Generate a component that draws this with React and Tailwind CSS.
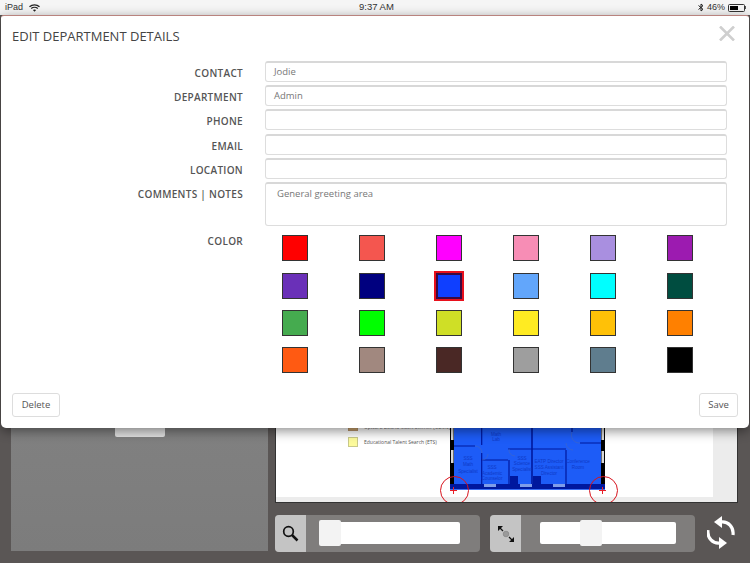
import React from "react";

const colors = [
  "#ff0000", "#f4564f", "#ff00ff", "#f78db5", "#a98fe0", "#9c1bb0",
  "#6a30b8", "#00007f", "#0f3fff", "#62a6fb", "#00ffff", "#004d40",
  "#45ab4f", "#00ff00", "#cfdf26", "#ffeb22", "#ffc107", "#ff8000",
  "#ff5a12", "#a1887f", "#4a2825", "#9e9e9e", "#5f7d8e", "#000000",
];

const labelClass = "w-[242px] text-right text-[10px] tracking-[0.3px] font-semibold text-[#555]";
const boxClass = "ml-[22px] w-[462px] rounded-[3px] border border-[#ddd] border-t-2 border-t-[#d8d8d8] bg-white text-[9.5px] text-[#777]";

function Field({ label, value }) {
  return (
    <div className="flex items-center h-[24.3px]">
      <div className={`${labelClass} pt-[4px]`}>{label}</div>
      <div className={`${boxClass} h-[21px] px-[8px] leading-[18px]`}>{value}</div>
    </div>
  );
}

function Slider({ icon, trackClass, knobClass }) {
  return (
    <div className="w-[205px] h-[37px] rounded-[4px] bg-[#7f7d7c] flex overflow-hidden shrink-0">
      <div className="w-[31px] bg-[#c4c4c4] flex items-center justify-center shrink-0">{icon}</div>
      <div className={`mt-[7px] h-[22px] rounded-[2px] bg-white relative ${trackClass}`}>
        <div className={`absolute top-[-2px] w-[22px] h-[26px] rounded-[2px] bg-[#f3f3f3] ${knobClass}`} />
      </div>
    </div>
  );
}

function FloorPlan() {
  return (
    <svg viewBox="0 0 155 65" className="w-[155px] h-[65px] absolute left-[174px] top-[409px]" fill="none">
      <rect x="0" y="0" width="155" height="65" fill="#1d5cf7" />
      <rect x="0" y="64" width="155" height="1" fill="#3a6ff5" />
      <rect x="0" y="0" width="4" height="59" fill="#000" />
      <rect x="1" y="0" width="2.5" height="15" fill="#d8d8d8" />
      <rect x="1" y="25" width="2.5" height="13" fill="#d8d8d8" />
      <rect x="151" y="0" width="4" height="59" fill="#000" />
      <rect x="151.5" y="0" width="2.5" height="15" fill="#d8d8d8" />
      <rect x="151.5" y="26" width="2.5" height="12" fill="#d8d8d8" />
      <rect x="0" y="59" width="155" height="5" fill="#00189e" />
      <rect x="34" y="59" width="12" height="3" fill="#7f9de8" />
      <rect x="70" y="59" width="12" height="3" fill="#7f9de8" />
      <rect x="103" y="59" width="12" height="3" fill="#7f9de8" />
      <rect x="60" y="51" width="8" height="8" fill="#00189e" />
      <rect x="83" y="51" width="8" height="8" fill="#00189e" />
      <g stroke="#00189e" strokeWidth="1.2">
        <path d="M4 21H25M31.7 0V20M31.7 28V59M31 35H58M59 35V59M58 24H116M116 25V59M130 18H151M122 0V7" />
        <path d="M82 0V59" strokeWidth="1.6" />
      </g>
      <g stroke="#3f66c8" strokeWidth="0.7">
        <path d="M25 21A7 7 0 0 1 32 28M59 24A6 6 0 0 0 65 31M116 18A7 7 0 0 0 123 25M122 7A8 8 0 0 0 130 18M32 35A6 6 0 0 0 38 29" />
      </g>
      <g fill="#0f3ac8" fontSize="4.6" fontFamily="Liberation Sans, sans-serif" textAnchor="middle">
        <text x="18" y="35">SSS</text><text x="18" y="41">Math</text><text x="18" y="48">Specialist</text>
        <text x="46" y="11">Math</text><text x="46" y="16">Lab</text>
        <text x="42" y="44">SSS</text><text x="42" y="50">Academic</text><text x="42" y="55">Counselor</text>
        <text x="72" y="35">SSS</text><text x="72" y="40">Science</text><text x="72" y="46">Specialist</text>
        <text x="99" y="38">EATP Director</text><text x="99" y="44">SSS Assistant</text><text x="99" y="50">Director</text>
        <text x="128" y="38">Conference</text><text x="128" y="44">Room</text>
      </g>
    </svg>
  );
}

function Crosshair({ className }) {
  return (
    <div className={`absolute w-[29px] h-[29px] rounded-full border-[1.5px] border-[#d8141e] ${className}`}>
      <div className="absolute left-[9.5px] top-[12.5px] w-[7px] h-px bg-[#e8202a]" />
      <div className="absolute left-[12.5px] top-[9.5px] w-px h-[7px] bg-[#e8202a]" />
    </div>
  );
}

export default function App() {
  return (
    <div className="relative w-[750px] h-[563px] overflow-hidden bg-[#5a5655] font-['Open_Sans',sans-serif]">
      {/* status bar */}
      <div className="h-[15px] bg-[#f5f5f5] flex items-center justify-between pl-[5px] pr-[4px] text-[9px] text-[#333] font-['Liberation_Sans',sans-serif]">
        <div className="flex items-center gap-[6px]">
          <span>iPad</span>
          <svg width="11" height="8" viewBox="0 0 11 8" fill="none" stroke="#222" strokeWidth="1.3">
            <path d="M.5 2.8C3.3.2 7.7.2 10.5 2.8M2.2 4.5C4 3 7 3 8.8 4.5" />
            <path d="M3.9 6.1C4.8 5.4 6.2 5.4 7.1 6.1L5.5 7.8Z" fill="#222" stroke="none" />
          </svg>
        </div>
        <span className="absolute left-[359px] text-[9.5px]">9:37 AM</span>
        <div className="flex items-center gap-[3px]">
          <svg width="6" height="9" viewBox="0 0 6 9" fill="none" stroke="#222" strokeWidth="1"><path d="M0.5 2.5 5 6.3 3 8V1l2 1.7L.5 6.5" /></svg>
          <span>46%</span>
          <div className="flex items-center">
            <div className="w-[17px] h-[8px] border border-[#333] rounded-[1.5px] p-[1px]"><div className="w-[8px] h-full bg-black" /></div>
            <div className="w-[1px] h-[3px] bg-[#555]" />
          </div>
        </div>
      </div>

      {/* background app */}
      <div className="h-[548px] flex pl-[11px] pr-[12px] gap-[7px]">
        <div className="w-[257px] h-[536px] bg-gradient-to-b from-[#8e8e8e] to-[#7c7c7c] relative">
          <div className="absolute left-[104px] top-[400px] w-[50px] h-[22px] rounded-[2px] bg-[#e2e2e2]" />
        </div>
        <div className="flex-1 flex flex-col">
          <div className="relative h-[488px] bg-white border border-[#333] overflow-hidden">
            <div className="absolute right-0 top-0 bottom-0 w-[24px] bg-[#ececec]" />
            <div className="absolute left-0 right-0 bottom-0 h-[5px] bg-[#ececec]" />
            <div className="absolute left-[72px] top-[407px] w-[10px] h-[8px] border border-[#b8946a] bg-[#c9a26d]" />
            <div className="absolute left-[72px] top-[421px] w-[10px] h-[10px] border border-[#c9c98a] bg-[#fdfb9c]" />
            <div className="absolute left-[88px] top-[408px] text-[5px] leading-[7px] text-[#666] whitespace-nowrap">Upward Bound Math/Science (UBMS)</div>
            <div className="absolute left-[88px] top-[422.5px] text-[5px] leading-[7px] text-[#555] whitespace-nowrap">Educational Talent Search (ETS)</div>
            <FloorPlan />
            <Crosshair className="left-[163.5px] top-[460px]" />
            <Crosshair className="left-[312.5px] top-[460px]" />
          </div>
          <div className="flex items-start mt-[12px] gap-[10px]">
            <Slider
              trackClass="ml-[13px] w-[141px]"
              knobClass="left-0"
              icon={
                <svg width="17" height="17" viewBox="0 0 17 17" fill="none" stroke="#111" strokeWidth="1.7">
                  <circle cx="6.5" cy="6.5" r="4.8" /><path d="M10 10l5.5 5.5" strokeWidth="2.5" />
                </svg>
              }
            />
            <Slider
              trackClass="ml-[19px] w-[136px]"
              knobClass="left-[40px]"
              icon={
                <svg width="18" height="18" viewBox="0 0 18 18" fill="none">
                  <path d="M2.5 2.5l3.5 3.5M12 12l3.5 3.5" stroke="#111" strokeWidth="1.3" />
                  <path d="M1 1h5L1 6zM17 17h-5l5-5z" fill="#111" />
                  <circle cx="9" cy="9" r="2.8" fill="#9a9a9a" stroke="#888" strokeWidth="0.8" />
                </svg>
              }
            />
            <svg width="28" height="35" viewBox="0 0 28 35" fill="none" className="ml-[2px] mt-[1px]">
              <path d="M14 6C21 5 27 11 26 19" stroke="#fff" strokeWidth="3.2" />
              <path d="M7 6l8-6v12z" fill="#fff" />
              <path d="M13 27C6 28 0 22 1 14" stroke="#fff" strokeWidth="3.2" />
              <path d="M20 27l-8-6v12z" fill="#fff" />
            </svg>
          </div>
        </div>
      </div>

      {/* modal */}
      <div className="absolute left-[1px] top-[15px] w-[748px] h-[413px] bg-white rounded-b-[5px] rounded-t-[3px] border-t border-t-[#b9837e] shadow-[0_3px_12px_rgba(0,0,0,0.45)]">
        <div className="absolute left-[11px] top-[11px] text-[13px] leading-[18px] text-[#444]">EDIT DEPARTMENT DETAILS</div>
        <svg className="absolute right-[14px] top-[10px]" width="16" height="15" viewBox="0 0 16 15" stroke="#cfcfcf" strokeWidth="2.6"><path d="M1 0.5 15 14.5M15 0.5 1 14.5" /></svg>

        <div className="pt-[43px]">
          <Field label="CONTACT" value="Jodie" />
          <Field label="DEPARTMENT" value="Admin" />
          <Field label="PHONE" value="" />
          <Field label="EMAIL" value="" />
          <Field label="LOCATION" value="" />
          <div className="flex mt-[2px]">
            <div className={`${labelClass} leading-[24px]`}>COMMENTS | NOTES</div>
            <div className={`${boxClass} h-[44px] px-[11px] pt-[2px] leading-[16px]`}>General greeting area</div>
          </div>
          <div className="flex mt-[9px]">
            <div className={`${labelClass} leading-[13px]`}>COLOR</div>
            <div className="ml-[39px] grid grid-cols-[repeat(6,26px)] gap-x-[51px] gap-y-[11.3px]">
              {colors.map((c, i) => (
                <div
                  key={c}
                  style={{ backgroundColor: c }}
                  className={i === 8 ? "w-[26px] h-[26px] border-2 border-[#3a0a40] outline-2 outline-[#e8101c]" : "w-[26px] h-[26px] border border-[#333]"}
                />
              ))}
            </div>
          </div>
        </div>

        <button className="absolute left-[11px] top-[377px] w-[48px] h-[24px] rounded-[3px] border border-[#ddd] text-[9.5px] text-[#555] bg-white">Delete</button>
        <button className="absolute left-[698px] top-[377px] w-[39px] h-[24px] rounded-[3px] border border-[#ddd] text-[9.5px] text-[#555] bg-white">Save</button>
      </div>
    </div>
  );
}
